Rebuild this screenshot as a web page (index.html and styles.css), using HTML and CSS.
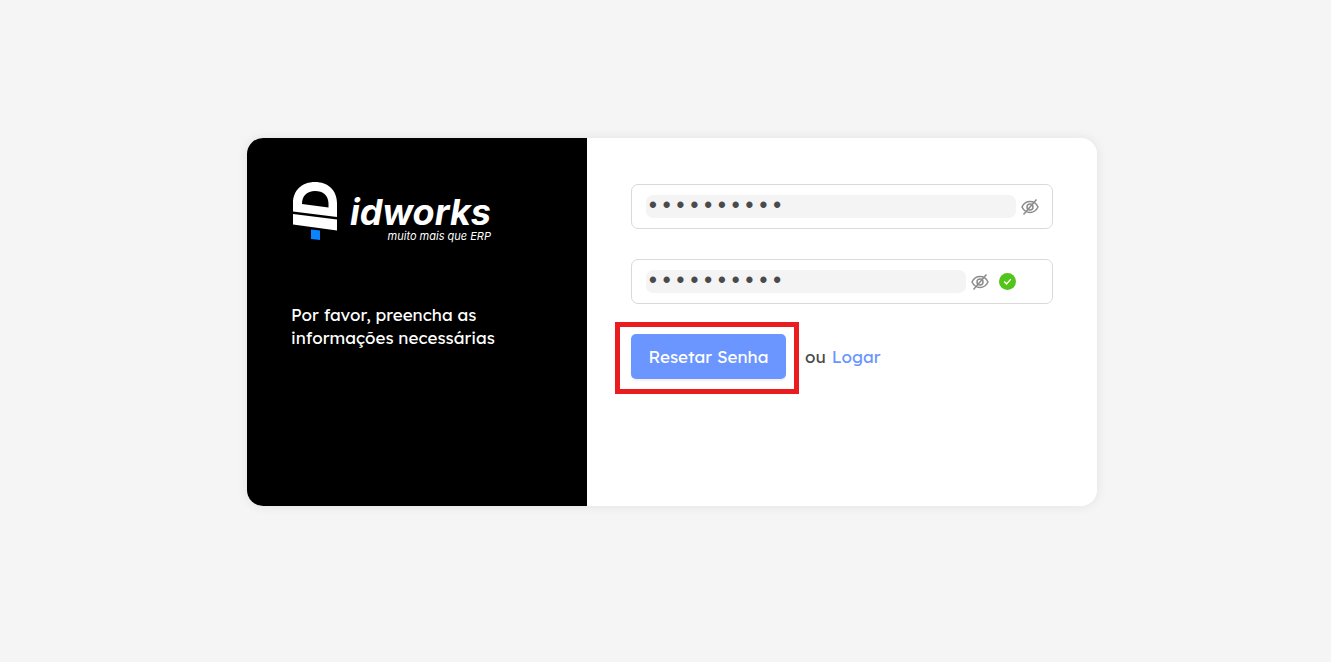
FILE: index.html
```
<!DOCTYPE html>
<html lang="pt-BR">
<head>
  <meta charset="UTF-8">
  <meta name="viewport" content="width=device-width, initial-scale=1.0">
  <title>idworks - Resetar Senha</title>
  <link rel="stylesheet" href="styles.css">
</head>
<body>
  <main class="card">
    <section class="brand">
      <div class="logo">
        <svg class="logo-mark" viewBox="0 0 44 58" aria-hidden="true">
          <path fill="#fff" fill-rule="evenodd" d="M0 29.500V21C0 8.500 9 0 22 0S44 8.500 44 21V35ZM9 22L35.500 25.500V21.500C35.500 13.500 30 9 22 9S9 14 9 22Z"/>
          <path fill="#fff" d="M0 32L44 37.500V48.500L0 42.500Z"/>
          <path fill="#0a84ff" d="M18 47.500L27 48.500V58L18 57Z"/>
        </svg>
        <div class="logo-text">
          <span class="logo-name">idworks</span>
          <span class="logo-tagline">muito mais que ERP</span>
        </div>
      </div>
      <p class="message">Por favor, preencha as informações necessárias</p>
    </section>
    <form class="form">
      <div class="field">
        <input class="password" type="password" value="senha12345" aria-label="Nova senha">
        <button class="toggle" type="button" aria-label="Mostrar senha">
          <svg viewBox="0 0 18 18">
            <path d="M1 9C4.500 1.800 13.500 1.800 17 9C13.500 16.200 4.500 16.200 1 9Z"/>
            <circle cx="9" cy="9" r="3"/>
            <path d="M2.500 16.500L15.500 1.500"/>
          </svg>
        </button>
      </div>
      <div class="field confirmed">
        <input class="password" type="password" value="senha12345" aria-label="Confirmar senha">
        <button class="toggle" type="button" aria-label="Mostrar senha">
          <svg viewBox="0 0 18 18">
            <path d="M1 9C4.500 1.800 13.500 1.800 17 9C13.500 16.200 4.500 16.200 1 9Z"/>
            <circle cx="9" cy="9" r="3"/>
            <path d="M2.500 16.500L15.500 1.500"/>
          </svg>
        </button>
        <svg class="check" viewBox="0 0 18 18" aria-hidden="true">
          <circle cx="9" cy="9" r="9"/>
          <path d="M5.500 9L8 11.500L12.500 6.500"/>
        </svg>
      </div>
      <div class="actions">
        <div class="highlight">
          <button class="submit" type="submit">Resetar Senha</button>
        </div>
        <span>ou</span>
        <a class="login" href="#">Logar</a>
      </div>
    </form>
  </main>
</body>
</html>
```
FILE: styles.css
```
* {
  box-sizing: border-box;
}
body {
  margin: 0;
  min-height: 100vh;
  padding: 0 0 18px 13px;
  display: flex;
  align-items: center;
  justify-content: center;
  background: #f5f5f5;
  color: #4a4a4a;
  font-family: Lexend, Lato, sans-serif;
  font-size: 17px;
  font-weight: 400;
  line-height: 23px;
}
.card {
  display: flex;
  width: 100%;
  max-width: 850px;
  background: #fff;
  border-radius: 16px;
  overflow: hidden;
  box-shadow: 0 0 12px rgba(0, 0, 0, 0.08);
}
.brand {
  width: 40%;
  padding: 44px;
  background: #000;
  color: #fff;
}
.logo {
  display: flex;
  gap: 13px;
  padding-left: 2px;
}
.logo-mark {
  flex: none;
  width: 44px;
  height: 58px;
}
.logo-text {
  display: flex;
  flex-direction: column;
  align-items: flex-end;
  padding-top: 12px;
  font-family: Inter, sans-serif;
  font-style: italic;
  white-space: nowrap;
}
.logo-name {
  font-size: 36px;
  font-weight: 700;
  line-height: 36px;
}
.logo-tagline {
  font-size: 11px;
  font-weight: 400;
  line-height: 12px;
}
.message {
  margin: 61px 0 0;
}
.form {
  flex: 1;
  padding: 46px 44px 127px;
}
.field {
  display: flex;
  align-items: center;
  height: 45px;
  margin-bottom: 30px;
  padding: 0 13px 0 14px;
  border: 1px solid #d9d9d9;
  border-radius: 7px;
}
.field.confirmed {
  padding-right: 36px;
}
.password {
  flex: 1;
  min-width: 0;
  height: 23px;
  padding: 0;
  border: 0;
  border-radius: 7px;
  background: #f4f4f4;
  color: #4a4a4a;
  font-family: "Liberation Mono", monospace;
  font-size: 23px;
}
.toggle {
  width: 18px;
  height: 18px;
  margin-left: 5px;
  padding: 0;
  border: 0;
  background: none;
  cursor: pointer;
}
.toggle svg {
  display: block;
  fill: none;
  stroke: #8c8c8c;
  stroke-width: 1.5;
}
.check {
  width: 17px;
  height: 17px;
  margin-left: 10px;
  fill: #52c41a;
}
.check path {
  fill: none;
  stroke: #fff;
  stroke-width: 1.5;
}
.actions {
  display: flex;
  align-items: center;
  gap: 6px;
}
.highlight {
  position: relative;
  margin-right: 13px;
}
.highlight::after {
  content: "";
  position: absolute;
  inset: -12px -13px -15px -16px;
  border: 5px solid #ea1c1f;
  pointer-events: none;
}
.submit {
  display: block;
  width: 155px;
  height: 45px;
  padding: 0;
  border: 0;
  border-radius: 5px;
  background: #6b95ff;
  color: #fff;
  font: inherit;
  box-shadow: 0 2px 2px rgba(0, 0, 0, 0.06);
  cursor: pointer;
}
.login {
  color: #6b95ff;
  text-decoration: none;
}
```
